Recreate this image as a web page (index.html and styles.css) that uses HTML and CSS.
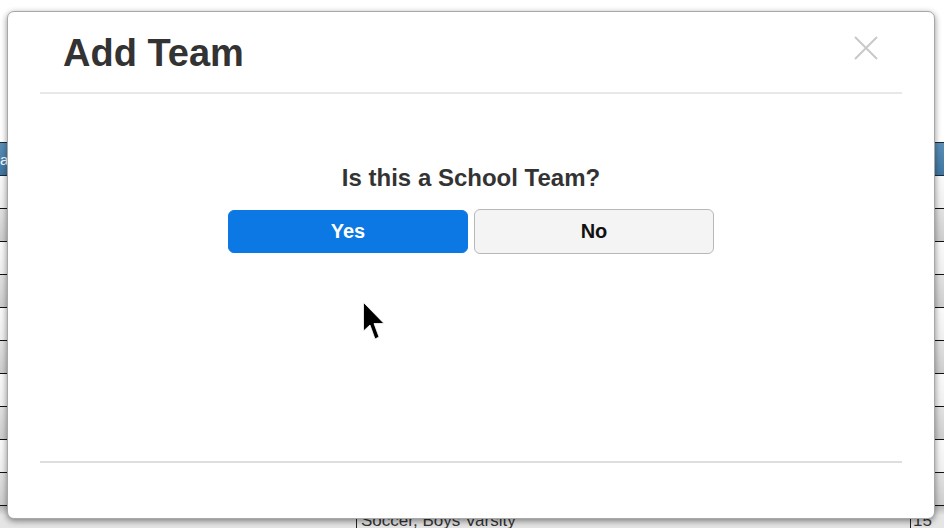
FILE: index.html
```html
<!DOCTYPE html>
<html>
<head>
<meta charset="utf-8">
<link rel="stylesheet" href="styles.css">
</head>
<body>
<div class="page">
  <div class="table">
    <div class="thead"><span class="th-a">a</span></div>
    <div class="row light"></div>
    <div class="row dark"></div>
    <div class="row light"></div>
    <div class="row dark"></div>
    <div class="row light"></div>
    <div class="row dark"></div>
    <div class="row light"></div>
    <div class="row dark"></div>
    <div class="row light"></div>
    <div class="row dark"></div>
    <div class="row dark last"><span class="cell-name">Soccer, Boys Varsity</span><span class="cell-num">15</span></div>
  </div>

  <div class="modal">
    <div class="modal-header">
      <h1 class="modal-title">Add Team</h1>
      <span class="close" aria-label="Close">
        <svg width="26" height="26" viewBox="0 0 26 26"><path d="M2 2 L24 24 M24 2 L2 24" stroke="#c9c9c9" stroke-width="2" fill="none"/></svg>
      </span>
    </div>
    <div class="modal-body">
      <p class="question">Is this a School Team?</p>
      <div class="buttons">
        <button class="btn btn-yes">Yes</button>
        <button class="btn btn-no">No</button>
      </div>
    </div>
    <div class="modal-footer"></div>
  </div>

  <svg class="cursor" width="24" height="40" viewBox="0 0 24 40"><path d="M0.5 0.5 L0.5 29 L7 23 L12 37 L16 35 L11 21.5 L21 21.5 Z" fill="#000" stroke="#fff" stroke-width="0.8"/></svg>
</div>
</body>
</html>
```

FILE: styles.css
```css
html, body {
  margin: 0;
  padding: 0;
  background: #ffffff;
}
body {
  font-family: "Liberation Sans", Arial, sans-serif;
  width: 944px;
  height: 528px;
  overflow: hidden;
}
.page {
  position: relative;
  width: 944px;
  height: 528px;
}
.table {
  padding-top: 142px;
  display: flex;
  flex-direction: column;
}
.thead {
  height: 32px;
  border-top: 1px solid #1d2a35;
  border-bottom: 1px solid #1d2a35;
  background: linear-gradient(#5a8fb8, #3f75a0);
  color: #fff;
  font-size: 16px;
  display: flex;
  align-items: center;
}
.th-a { margin-left: 0; font-size: 15px; }
.row {
  height: 32px;
  border-bottom: 1px solid #111;
  display: flex;
  align-items: flex-end;
}
.row.light { background: linear-gradient(#fafafa, #efefef); }
.row.dark { background: linear-gradient(#e2e2e2, #cdcdcd); }
.row.last {
  border-bottom: none;
  height: 23px;
  background: linear-gradient(#b8b8b8, #e5e5e5 40%, #e5e5e5);
}
.cell-name {
  margin-left: 356px;
  border-left: 1px solid #222;
  padding-left: 4px;
  font-size: 17px;
  color: #333;
  line-height: 16px;
}
.cell-num {
  margin-left: auto;
  margin-right: 12px;
  font-size: 17px;
  color: #333;
  border-left: 1px solid #222;
  padding-left: 2px;
  line-height: 16px;
}
.modal {
  position: absolute;
  left: 7px;
  top: 11px;
  width: 926px;
  height: 506px;
  background: #fff;
  border: 1px solid #a8a8a8;
  border-radius: 7px;
  box-shadow: 0 2px 6px rgba(0,0,0,0.45);
  display: flex;
  flex-direction: column;
}
.modal-header {
  margin: 0 32px;
  padding: 20px 23px 17px;
  border-bottom: 2px solid #e8e8e8;
  display: flex;
  justify-content: space-between;
  align-items: flex-start;
}
.modal-title {
  margin: 0;
  font-size: 38px;
  line-height: 43px;
  font-weight: bold;
  color: #333;
}
.close {
  display: block;
  width: 26px;
  height: 26px;
  margin-top: 3px;
  margin-right: 0;
}
.close svg { display: block; }
.modal-body {
  flex: 1;
  display: flex;
  flex-direction: column;
  align-items: center;
  padding-top: 70px;
}
.question {
  margin: 0;
  font-size: 24px;
  line-height: 28px;
  font-weight: bold;
  color: #333;
}
.buttons {
  margin-top: 17px;
  display: flex;
  align-items: center;
  gap: 6px;
}
.btn {
  font-family: "Liberation Sans", Arial, sans-serif;
  font-weight: bold;
  font-size: 20px;
  width: 240px;
  border-radius: 6px;
  padding: 0;
  cursor: default;
}
.btn-yes {
  height: 43px;
  background: #0b78e3;
  border: 1px solid #0b78e3;
  color: #fff;
}
.btn-no {
  height: 45px;
  background: #f4f4f4;
  border: 1px solid #b8b8b8;
  color: #111;
}
.modal-footer {
  margin: 0 32px;
  height: 55px;
  border-top: 2px solid #dedede;
}
.cursor {
  position: absolute;
  left: 363px;
  top: 302px;
}
```
